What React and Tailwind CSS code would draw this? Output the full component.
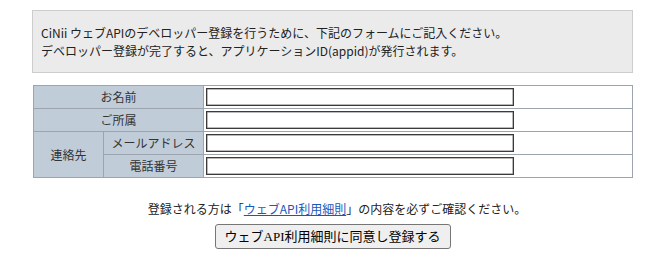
const sans = { fontFamily: '"Noto Sans CJK JP", "Noto Sans", sans-serif' };

const labelCell = 'bg-[#c1ccd9] border border-[#9ca4b0] text-center text-[12px] text-[#333] h-[23px] p-0';
const inputCell = 'border border-[#9ca4b0] bg-white h-[23px] px-[2px] py-0';

const TextInput = () => (
  <input
    type="text"
    className="block w-[308px] h-[18px] border border-[#3a3a3a] shadow-[inset_0_0_0_0.5px_#777] bg-white"
  />
);

export default function App() {
  return (
    <div className="w-[668px] h-[272px] bg-white text-[#222]" style={sans}>
      <div className="pt-[10px] pl-[32px]">
        <div className="w-[601px] h-[63px] bg-[#ebebeb] border border-[#cdcdcd] px-[8px] pt-[13px] text-[12px] leading-[18px]">
          <p>CiNii ウェブAPIのデベロッパー登録を行うために、下記のフォームにご記入ください。</p>
          <p>デベロッパー登録が完了すると、アプリケーションID(appid)が発行されます。</p>
        </div>

        <table className="mt-[12px] ml-px w-[600px] border-collapse">
          <tbody>
            <tr>
              <th colSpan={2} className={`${labelCell} font-normal w-[170px]`}>お名前</th>
              <td className={inputCell}><TextInput /></td>
            </tr>
            <tr>
              <th colSpan={2} className={`${labelCell} font-normal`}>ご所属</th>
              <td className={inputCell}><TextInput /></td>
            </tr>
            <tr>
              <th rowSpan={2} className={`${labelCell} font-normal w-[70px]`}>連絡先</th>
              <th className={`${labelCell} font-normal w-[100px]`}>メールアドレス</th>
              <td className={inputCell}><TextInput /></td>
            </tr>
            <tr>
              <th className={`${labelCell} font-normal`}>電話番号</th>
              <td className={inputCell}><TextInput /></td>
            </tr>
          </tbody>
        </table>
      </div>

      <p className="mt-[22px] text-center text-[12px] leading-[18px] pl-[6px]">
        登録される方は「<a href="#" className="text-[#1a57b8] underline">ウェブAPI利用細則</a>」の内容を必ずご確認ください。
      </p>

      <div className="mt-[6px] flex justify-center pr-[3px]">
        <button
          type="button"
          className="w-[236px] h-[25px] rounded-[3px] border border-[#767676] bg-[#efefef] text-[13px] text-black"
          style={{ fontFamily: '"Liberation Serif", "Noto Sans CJK JP", serif' }}
        >
          ウェブAPI利用細則に同意し登録する
        </button>
      </div>
    </div>
  );
}
